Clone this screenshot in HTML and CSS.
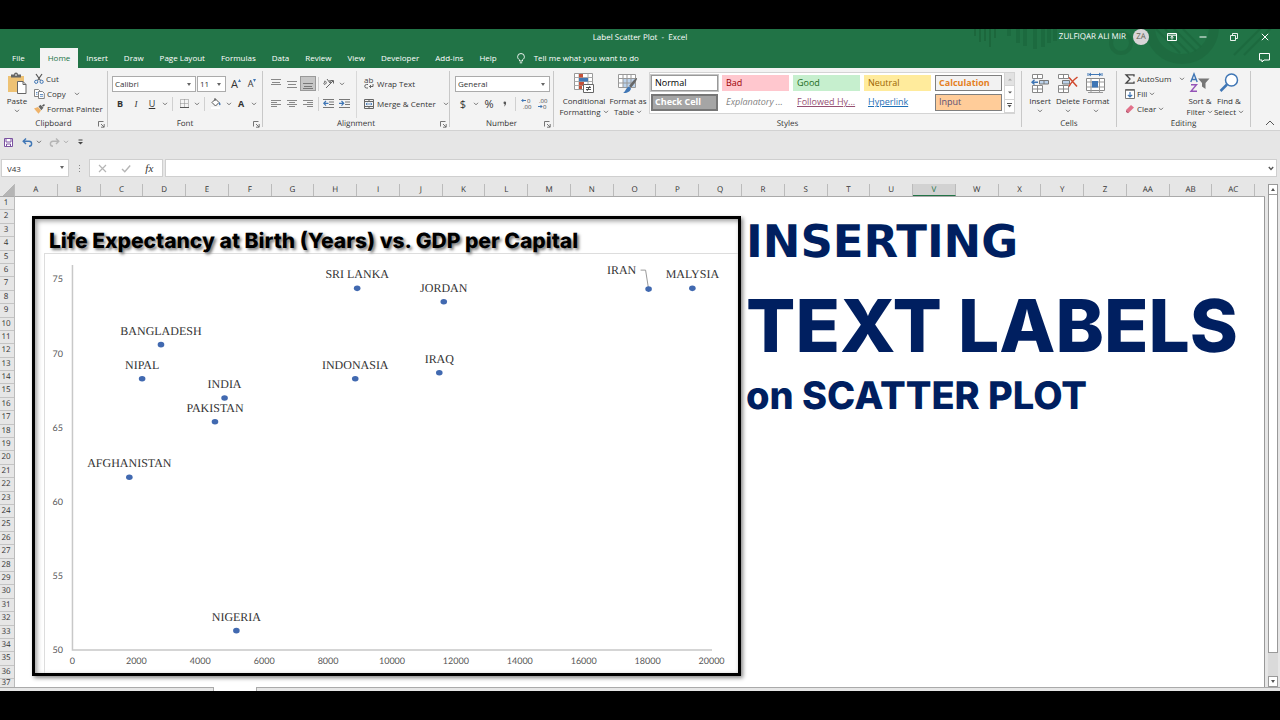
FILE: index.html
```html
<!DOCTYPE html>
<html lang="en">
<head>
    <meta charset="UTF-8">
    <meta name="viewport" content="width=device-width, initial-scale=1.0">
    <title>Label Scatter Plot - Excel</title>
    <link rel="stylesheet" href="styles.css">
</head>
<body>
    <!-- shared glyphs -->
    <svg class="defs" aria-hidden="true">
        <symbol id="chev" viewBox="0 0 6 4"><path d="M1 .8 3 2.8 5 .8" fill="none" stroke="#666" stroke-width=".9"/></symbol>
        <symbol id="launch" viewBox="0 0 7 7"><path d="M.5 5.5v-5h5M3 3l3 3M6.2 3v3.2H3" fill="none" stroke="#666" stroke-width=".9"/></symbol>
    </svg>

    <div class="app">
        <header class="titlebar">
            <svg class="pattern" viewBox="0 0 320 39" aria-hidden="true">
                <g fill="none" stroke="#1a6239">
                    <path d="M15 0v7M20 0v13M25 0v12M30 0v18M35 0v9" stroke-width="2"/>
                    <path d="M49 0v7M58 0v14M65 0v17M75 0v20M83 0v18M89 0v14M95 0v12" stroke-width="4" opacity=".7"/>
                    <circle cx="161" cy="14" r="10" stroke-width="4" opacity=".6"/>
                    <circle cx="222" cy="-2" r="32" stroke-width="10" opacity=".6"/>
                    <path d="M196 0l24 24M205 0l24 24M214 0l22 22M223 0l18 18M274 26l28-28M284 26l28-28" stroke-width="2" opacity=".7"/>
                </g>
            </svg>
            <div class="title-row">
                <h1 class="doc-title">Label Scatter Plot&nbsp; -&nbsp; Excel</h1>
                <div class="account">
                    <span>ZULFIQAR ALI MIR</span>
                    <span class="avatar">ZA</span>
                    <div class="win-buttons">
                        <button aria-label="Ribbon display options"><svg width="10" height="8" viewBox="0 0 10 8"><path d="M.5.5h9v7h-9zM.5 2.2h9M5 6.5v-3M3.5 4.7 5 3.3l1.5 1.4" fill="none" stroke="#fff"/></svg></button>
                        <button aria-label="Minimize"><svg width="8" height="8" viewBox="0 0 8 8"><path d="M.5 4h7" stroke="#fff"/></svg></button>
                        <button aria-label="Restore"><svg width="8" height="8" viewBox="0 0 8 8"><path d="M.5 2.5h5v5h-5zM2.5 2.5v-2h5v5h-2" fill="none" stroke="#fff" stroke-width=".9"/></svg></button>
                        <button aria-label="Close"><svg width="8" height="8" viewBox="0 0 8 8"><path d="M.8.8l6.4 6.4M7.2.8.8 7.2" stroke="#fff"/></svg></button>
                    </div>
                </div>
            </div>
            <nav class="tabs">
                <button class="file">File</button>
                <button class="active">Home</button>
                <button>Insert</button>
                <button>Draw</button>
                <button>Page Layout</button>
                <button>Formulas</button>
                <button>Data</button>
                <button>Review</button>
                <button>View</button>
                <button>Developer</button>
                <button>Add-ins</button>
                <button>Help</button>
                <button class="tell"><svg width="8" height="11" viewBox="0 0 8 11"><path d="M2.5 8V6.8C1.200 6 .6 5 .6 3.800a3.400 3.300 0 0 1 6.800 0c0 1.200-.6 2.200-1.900 3V8zM2.800 9.800h2.400" fill="none" stroke="#fff" stroke-width=".9"/></svg>Tell me what you want to do</button>
                <button class="comments" aria-label="Comments"><svg width="11" height="10" viewBox="0 0 11 10"><path d="M.5.5h10v6.500H5L3 9V7H.5z" fill="none" stroke="#fff"/></svg></button>
            </nav>
        </header>

        <section class="ribbon">
            <div class="group clipboard">
                <div class="group-body">
                    <button class="big"><svg width="20" height="21" viewBox="0 0 20 21"><path d="M1 3h16v16H1z" fill="#eec274"/><path d="M4 4.500v-3h3a1.800 1.800 0 0 1 4 0h3v3z" fill="#666"/><path d="M8 2h2" stroke="#fff"/><path d="M10.500 8.500h5.500l3 3v9h-8.500z" fill="#fff" stroke="#666"/><path d="M16 8.500v3h3" fill="none" stroke="#666"/></svg>Paste<svg class="chev"><use href="#chev"/></svg></button>
                    <div class="stack">
                        <button><svg width="10" height="10" viewBox="0 0 10 10"><path d="M2 0l4.500 6.500M8 0 3.500 6.500" stroke="#555" stroke-width="1.200"/><circle cx="2.200" cy="7.800" r="1.600" fill="none" stroke="#3f76b5"/><circle cx="7.600" cy="7.800" r="1.600" fill="none" stroke="#3f76b5"/></svg>Cut</button>
                        <button><svg width="11" height="10" viewBox="0 0 11 10"><path d="M.5.5h4l1.500 1.500v5.500H.5z" fill="#fff" stroke="#777" stroke-width=".9"/><path d="M4.500 2.500h4l1.800 1.800v5.200H4.500z" fill="#fff" stroke="#777" stroke-width=".9"/><path d="M6 5.500h3M6 7.300h3M2 3.500h1.500M2 5.200h1.500" stroke="#3f76b5" stroke-width=".8"/></svg>Copy<svg class="chev"><use href="#chev"/></svg></button>
                        <button><svg width="11" height="10" viewBox="0 0 11 10"><path d="M0 4.500 4 3l3 3.500L4.500 9.800z" fill="#efb36a"/><path d="M4.500 2.500 6.500.8l3 3-2.200 2.400z" fill="#666"/><path d="M8.500 2.200 10.500.6" stroke="#555" stroke-width="1.500"/></svg>Format Painter</button>
                    </div>
                </div>
                <div class="group-label">Clipboard<svg class="launch"><use href="#launch"/></svg></div>
            </div>

            <div class="group font">
                <div class="group-body rows">
                    <div class="row">
                        <label class="drop face"><select aria-label="Font"><option>Calibri</option></select></label>
                        <label class="drop size"><select aria-label="Font size"><option>11</option></select></label>
                        <button class="t gap">A<svg width="3" height="3" viewBox="0 0 3 3"><path d="M0 3 1.500 0 3 3z" fill="#3f76b5"/></svg></button>
                        <button class="t small">A<svg width="3" height="3" viewBox="0 0 3 3"><path d="M0 0h3L1.500 3z" fill="#3f76b5"/></svg></button>
                    </div>
                    <div class="row">
                        <button class="t"><b>B</b></button>
                        <button class="t serif"><i>I</i></button>
                        <button class="t"><u>U</u></button>
                        <button class="c"><svg class="chev"><use href="#chev"/></svg></button>
                        <span class="sep"></span>
                        <button class="t"><svg width="9" height="9" viewBox="0 0 9 9"><path d="M.5.5h8v8h-8zM4.500.5v8M.5 4.500h8" fill="none" stroke="#888" stroke-dasharray="1 1"/><path d="M0 8.500h9" stroke="#555"/></svg></button>
                        <button class="c"><svg class="chev"><use href="#chev"/></svg></button>
                        <span class="sep"></span>
                        <button class="t"><svg width="10" height="11" viewBox="0 0 10 11"><path d="M1 4.500 4.500 1l3.500 3.500L4.500 8z" fill="#fff" stroke="#555"/><path d="M4 0v3" stroke="#555"/><path d="M8.500 4c1.500 2 1.200 3 .4 3.200S7.500 6 8.500 4z" fill="#3f76b5"/><path d="M0 9h9v2H0z" fill="#fff"/></svg></button>
                        <button class="c"><svg class="chev"><use href="#chev"/></svg></button>
                        <button class="t"><b>A</b></button>
                        <button class="c"><svg class="chev"><use href="#chev"/></svg></button>
                    </div>
                </div>
                <div class="group-label">Font<svg class="launch"><use href="#launch"/></svg></div>
            </div>

            <div class="group align">
                <div class="group-body">
                    <div class="rows">
                        <div class="row">
                            <button class="t"><svg width="10" height="10" viewBox="0 0 10 10"><path d="M0 .5h10M1 3.500h8M0 5.500h10" stroke="#888"/></svg></button>
                            <button class="t"><svg width="10" height="10" viewBox="0 0 10 10"><path d="M0 2.500h10M1 5.500h8M0 8.500h10" stroke="#888"/></svg></button>
                            <button class="t pressed"><svg width="10" height="10" viewBox="0 0 10 10"><path d="M0 4.500h10M1 7.500h8M0 9.500h10" stroke="#777"/></svg></button>
                            <span class="sep"></span>
                            <button class="t"><svg width="12" height="11" viewBox="0 0 12 11"><path d="M3 10 10 3M10.500 5.500V2.500h-3" fill="none" stroke="#666"/><path d="M1 3.500c2-1 3 1 1.500 2.500S0 5 2 4M4 1l3 4M6 3c2-1 2.500 1 1 2" fill="none" stroke="#555" stroke-width=".9"/></svg></button>
                            <button class="c"><svg class="chev"><use href="#chev"/></svg></button>
                        </div>
                        <div class="row">
                            <button class="t"><svg width="10" height="10" viewBox="0 0 10 10"><path d="M0 1.500h10M0 3.500h6M0 5.500h10M0 7.500h6" stroke="#888"/></svg></button>
                            <button class="t"><svg width="10" height="10" viewBox="0 0 10 10"><path d="M0 1.500h10M2 3.500h6M0 5.500h10M2 7.500h6" stroke="#888"/></svg></button>
                            <button class="t"><svg width="10" height="10" viewBox="0 0 10 10"><path d="M0 1.500h10M4 3.500h6M0 5.500h10M4 7.500h6" stroke="#888"/></svg></button>
                            <span class="sep"></span>
                            <button class="t"><svg width="12" height="10" viewBox="0 0 12 10"><path d="M0 .5h11M6 3h5M6 5.500h5M0 8.500h11" stroke="#777"/><path d="M5.500 4.300H1M3 2 .8 4.300 3 6.600" fill="none" stroke="#3f76b5" stroke-width="1.200"/></svg></button>
                            <button class="t"><svg width="12" height="10" viewBox="0 0 12 10"><path d="M0 .5h11M6 3h5M6 5.500h5M0 8.500h11" stroke="#777"/><path d="M0 4.300h4.500M2.500 2l2.200 2.300-2.200 2.300" fill="none" stroke="#3f76b5" stroke-width="1.200"/></svg></button>
                        </div>
                    </div>
                    <div class="rows wrap">
                        <button class="txt"><svg width="10" height="11" viewBox="0 0 10 11"><text x="0" y="5" class="ico wide">ab</text><path d="M4 6.500H2.500a1.700 1.700 0 0 0 0 3.500H4M9 6v2.500H5.500M7 7 5.500 8.500 7 10" fill="none" stroke="#555" stroke-width=".9"/></svg>Wrap Text</button>
                        <button class="txt"><svg width="10" height="10" viewBox="0 0 10 10"><path d="M.5.5h9v9h-9zM.5 2.500h9M.5 7.500h9M5 .5v2M5 7.500v2" fill="none" stroke="#666"/><path d="M2 5h6M3.200 3.800 2 5l1.200 1.200M6.800 3.800 8 5 6.800 6.200" fill="none" stroke="#3f76b5" stroke-width=".8"/></svg>Merge &amp; Center<svg class="chev far"><use href="#chev"/></svg></button>
                    </div>
                </div>
                <div class="group-label">Alignment<svg class="launch"><use href="#launch"/></svg></div>
            </div>

            <div class="group number">
                <div class="group-body rows">
                    <div class="row">
                        <label class="drop format"><select aria-label="Number format"><option>General</option></select></label>
                    </div>
                    <div class="row">
                        <button class="t sym">$</button>
                        <button class="c"><svg class="chev"><use href="#chev"/></svg></button>
                        <button class="t sym">%</button>
                        <button class="t sym"><svg width="4" height="6" viewBox="0 0 4 6"><path d="M.5 1.800a1.300 1.300 0 1 1 2.600 0C3.100 3.500 2.500 5 .8 5.500c.7-.8 1-1.500.9-2.300C1 3.200.5 2.600.5 1.800z" fill="#555"/></svg></button>
                        <span class="sep"></span>
                        <button class="t"><svg width="11" height="11" viewBox="0 0 11 11"><path d="M5 2.500H.8M2.300 1 .8 2.500 2.300 4" fill="none" stroke="#3f76b5"/><text x="6" y="5" class="ico">0</text><text x="2" y="11" class="ico">.00</text></svg></button>
                        <button class="t"><svg width="11" height="11" viewBox="0 0 11 11"><path d="M1 8.500h4M3.500 7 5 8.500 3.500 10" fill="none" stroke="#3f76b5"/><text x="2" y="5" class="ico">.00</text><text x="6" y="11" class="ico">0</text></svg></button>
                    </div>
                </div>
                <div class="group-label">Number<svg class="launch"><use href="#launch"/></svg></div>
            </div>

            <div class="group styles">
                <div class="group-body">
                    <button class="big cond"><svg width="20" height="21" viewBox="0 0 20 21"><path d="M.5.5h18v16H.5z" fill="#fff" stroke="#999"/><path d="M5 .5v16M14 .5v16M.5 4.500h18M.5 8.500h18M.5 12.500h18" stroke="#aaa"/><path d="M5 1h4v3.500H5zM5 9h5v3.500H5zM5 13h3v3H5z" fill="#c4513a"/><path d="M5 5h9v3.500H5z" fill="#3f76b5"/><path d="M9.500 11.500h10v8h-10z" fill="#fff" stroke="#666"/><path d="M12 14.500h5M12 16.500h5M16 13l-3 5" stroke="#444" stroke-width=".9"/></svg>Conditional<span>Formatting <svg class="chev"><use href="#chev"/></svg></span></button>
                    <button class="big table"><svg width="20" height="21" viewBox="0 0 20 21"><path d="M.5 1.500h17v13H.5z" fill="#fff" stroke="#999"/><path d="M5 6h12v8H5z" fill="#bcd3ec"/><path d="M5 1.500v13M9 1.500v13M13 1.500v13M.5 5.500h17M.5 10h17" stroke="#999"/><path d="M19 5c.8 1-4 8-6 9.500L11 13c1.500-2 7-9 8-8z" fill="#666"/><path d="M11 13.500l2 2c-.5 3-4 5-8 4.500 2.500-1 2.500-5 6-6.500z" fill="#3f76b5"/></svg>Format as<span>Table <svg class="chev"><use href="#chev"/></svg></span></button>
                    <div class="gallery">
                        <div class="swatches">
                            <button class="normal">Normal</button>
                            <button class="bad">Bad</button>
                            <button class="good">Good</button>
                            <button class="neutral">Neutral</button>
                            <button class="calc">Calculation</button>
                            <button class="check">Check Cell</button>
                            <button class="expl">Explanatory ...</button>
                            <button class="followed">Followed Hy...</button>
                            <button class="link">Hyperlink</button>
                            <button class="input">Input</button>
                        </div>
                        <div class="gallery-nav">
                            <button class="off" aria-label="Up"><svg width="4" height="3" viewBox="0 0 4 3"><path d="M0 2.500 2 .5l2 2z" fill="#aaa"/></svg></button>
                            <button aria-label="Down"><svg width="4" height="3" viewBox="0 0 4 3"><path d="M0 .5h4l-2 2z" fill="#555"/></svg></button>
                            <button aria-label="More"><svg width="5" height="5" viewBox="0 0 5 5"><path d="M0 .5h5" stroke="#555"/><path d="M.5 2h4l-2 2.500z" fill="#555"/></svg></button>
                        </div>
                    </div>
                </div>
                <div class="group-label">Styles</div>
            </div>

            <div class="group cells">
                <div class="group-body">
                    <button class="big"><svg width="20" height="21" viewBox="0 0 20 21"><path d="M2.500 1.500h10v4h-10zM7.500 1.500v4M2.500 12.500h10v7h-10zM7.500 12.500v7M2.500 16h10" fill="#fff" stroke="#888"/><path d="M9.500 7.500h9v3.500h-9zM14 7.500V11" fill="#bcd3ec" stroke="#777"/><path d="M8 9.200H2M4.500 6.800 2 9.200l2.500 2.400" fill="none" stroke="#3f76b5" stroke-width="1.400"/></svg>Insert<svg class="chev"><use href="#chev"/></svg></button>
                    <button class="big"><svg width="20" height="21" viewBox="0 0 20 21"><path d="M.5 1.500h10v4H.5zM5.500 1.500v4M.5 12.500h10v7H.5zM5.500 12.500v7M.5 16h10" fill="#fff" stroke="#888"/><path d="M4.500 7.500h7V11h-7z" fill="#bcd3ec" stroke="#777"/><path d="M11 4.500l8 9M19.500 4c-4 3-7 6-8.500 9.500" fill="none" stroke="#d1492e" stroke-width="1.500"/></svg>Delete<svg class="chev"><use href="#chev"/></svg></button>
                    <button class="big"><svg width="20" height="21" viewBox="0 0 20 21"><path d="M2 0v3M16 0v3M3 1.500h12M5 0 3 1.500 5 3M13 0l2 1.500L13 3" fill="none" stroke="#3f76b5"/><path d="M.5 5.500h18v12H.5z" fill="#fff" stroke="#888"/><path d="M5 5.500v14M13.500 5.500v14M.5 9h18M.5 14h18M2 19.500h15" stroke="#999" fill="none"/><path d="M6 8h6v6.500H6z" fill="#3f76b5"/></svg>Format<svg class="chev"><use href="#chev"/></svg></button>
                </div>
                <div class="group-label">Cells</div>
            </div>

            <div class="group editing">
                <div class="group-body">
                    <div class="stack">
                        <button><svg width="10" height="10" viewBox="0 0 10 10"><path d="M9 2.500V.8H1L5 5 1 9.200h8V7.500" fill="none" stroke="#444" stroke-width="1.300"/></svg>AutoSum<svg class="chev"><use href="#chev"/></svg></button>
                        <button><svg width="10" height="10" viewBox="0 0 10 10"><path d="M.5.5h9v9h-9z" fill="#fff" stroke="#777"/><path d="M.5 1h9" stroke="#666" stroke-width="1.500"/><path d="M5 3v5M2.800 5.800 5 8l2.200-2.200" fill="none" stroke="#3f76b5" stroke-width="1.200"/></svg>Fill<svg class="chev near"><use href="#chev"/></svg></button>
                        <button><svg width="10" height="10" viewBox="0 0 10 10"><path d="M1 6 6 1l3 2.500-5 5z" fill="#e2718a"/><path d="M1 6l3 2.500-1 .8L1 8z" fill="#b8506a"/></svg>Clear<svg class="chev near"><use href="#chev"/></svg></button>
                    </div>
                    <button class="big sort"><svg width="20" height="21" viewBox="0 0 20 21"><path d="M.8 9 4 1l3.200 8M2 6.500h4" fill="none" stroke="#3f76b5" stroke-width="1.400"/><path d="M1 11.700h5.500L1 18.300h6" fill="none" stroke="#9454b8" stroke-width="1.400"/><path d="M8 5.500h11.500L15.500 10v6L12 13.500V10z" fill="#777"/></svg>Sort &amp;<span>Filter <svg class="chev"><use href="#chev"/></svg></span></button>
                    <button class="big find"><svg width="20" height="21" viewBox="0 0 20 21"><circle cx="12.500" cy="7" r="6" fill="#fff" stroke="#3f76b5" stroke-width="1.500"/><path d="M8 11.500 1.500 18" stroke="#3f76b5" stroke-width="2.500"/></svg>Find &amp;<span>Select <svg class="chev"><use href="#chev"/></svg></span></button>
                </div>
                <div class="group-label">Editing</div>
            </div>
            <button class="collapse" aria-label="Collapse ribbon"><svg width="10" height="6" viewBox="0 0 10 6"><path d="M1 5l4-4 4 4" fill="none" stroke="#555"/></svg></button>
        </section>

        <div class="quick">
            <button aria-label="Save"><svg width="9" height="9" viewBox="0 0 9 9"><path d="M.5.5h8v8h-8z" fill="#fff" stroke="#7b52a1"/><path d="M2 1v3h5V1M2.500 8V6h4v2" fill="none" stroke="#7b52a1"/></svg></button>
            <button aria-label="Undo"><svg width="11" height="9" viewBox="0 0 11 9"><path d="M4 .6 1.200 3.300 4 6M1.500 3.300H7c3.500 0 3.500 5 0 5" fill="none" stroke="#3f76b5" stroke-width="1.400"/></svg></button>
            <button class="c"><svg class="chev"><use href="#chev"/></svg></button>
            <button class="redo" aria-label="Redo"><svg width="11" height="9" viewBox="0 0 11 9"><path d="M7 .6l2.800 2.700L7 6M9.500 3.300H4c-3.500 0-3.500 5 0 5" fill="none" stroke="#b5b5b5" stroke-width="1.400"/></svg></button>
            <button class="c faded"><svg class="chev"><use href="#chev"/></svg></button>
            <button class="more" aria-label="Customize"><svg width="5" height="6" viewBox="0 0 5 6"><path d="M.5 1h4" stroke="#444"/><path d="M0 3h5L2.500 5.500z" fill="#444"/></svg></button>
        </div>

        <div class="formula-bar">
            <label class="drop namebox"><input type="text" value="V43" aria-label="Name box"></label>
            <span class="dots"><i></i><i></i><i></i></span>
            <div class="fx">
                <button aria-label="Cancel"><svg width="9" height="9" viewBox="0 0 9 9"><path d="M1 1l7 7M8 1 1 8" stroke="#b5b5b5" stroke-width="1.200"/></svg></button>
                <button aria-label="Enter"><svg width="10" height="9" viewBox="0 0 10 9"><path d="M1 5l2.800 2.800L9.200 1.500" fill="none" stroke="#b5b5b5" stroke-width="1.400"/></svg></button>
                <button class="fn">fx</button>
            </div>
            <label class="formula"><input type="text" aria-label="Formula"><svg width="6" height="5" viewBox="0 0 6 5"><path d="M.8 1 3 3.500 5.200 1" fill="none" stroke="#555" stroke-width="1.300"/></svg></label>
        </div>

        <main class="sheet">
            <div class="corner"></div>
            <div class="cols" id="cols"></div>
            <div class="rownums" id="rownums"></div>
            <div class="canvas">
                <figure class="chart">
                    <figcaption>Life Expectancy at Birth (Years) vs. GDP per Capital</figcaption>
                    <svg class="plot" viewBox="0 0 694 420" id="plot">
                        <path class="axis" d="M27.500 11v385.500H668"/>
                    </svg>
                </figure>
                <div class="headline">
                    <p class="one">INSERTING</p>
                    <p class="two">TEXT LABELS</p>
                    <p class="three">on SCATTER PLOT</p>
                </div>
            </div>
            <div class="scroll">
                <button aria-label="Scroll up"><svg width="4" height="3" viewBox="0 0 4 3"><path d="M0 3 2 0l2 3z" fill="#555"/></svg></button>
                <div class="thumb"></div>
                <button class="down" aria-label="Scroll down"><svg width="4" height="3" viewBox="0 0 4 3"><path d="M0 0h4L2 3z" fill="#555"/></svg></button>
            </div>
        </main>
        <footer class="sheet-tabs"><span class="strip left"></span><span class="tab"></span><span class="strip"></span></footer>
    </div>

    <script>
        const cols = document.getElementById('cols');
        const rownums = document.getElementById('rownums');
        const plot = document.getElementById('plot');

        // A..Z, AA..AC
        for (let i = 0; i < 29; i++) {
            const el = document.createElement('span');
            el.textContent = (i > 25 ? 'A' : '') + String.fromCharCode(65 + i % 26);
            if (el.textContent === 'V') el.className = 'selected';
            cols.appendChild(el);
        }

        for (let r = 1; r <= 37; r++) {
            const el = document.createElement('span');
            el.textContent = r;
            rownums.appendChild(el);
        }

        const add = (tag, attrs, text) => {
            const el = document.createElementNS('http://www.w3.org/2000/svg', tag);
            for (const k in attrs) el.setAttribute(k, attrs[k]);
            if (text !== undefined) el.textContent = text;
            plot.appendChild(el);
        };

        // plot area: 0..20000 across, 50..75 up
        const px = gdp => 27.5 + gdp * 640 / 20000;
        const py = age => 396.5 - (age - 50) * 371 / 25;

        for (let v = 50; v <= 75; v += 5) add('text', { x: 18, y: py(v) + 3, class: 'tick y' }, v);
        for (let v = 0; v <= 20000; v += 2000) add('text', { x: px(v), y: 411, class: 'tick' }, v);

        // name, GDP per capita, life expectancy
        const data = [
            ['SRI LANKA', 8910, 74.4],
            ['JORDAN', 11620, 73.5],
            ['IRAN', 18030, 74.35, -27, -15],
            ['MALYSIA', 19400, 74.4],
            ['BANGLADESH', 2770, 70.6],
            ['NIPAL', 2180, 68.3],
            ['INDIA', 4760, 67],
            ['PAKISTAN', 4460, 65.4],
            ['INDONASIA', 8850, 68.3],
            ['IRAQ', 11480, 68.7],
            ['AFGHANISTAN', 1780, 61.65],
            ['NIGERIA', 5130, 51.3]
        ];
        data.forEach(([name, gdp, age, dx = 0, dy = -10]) => {
            const x = px(gdp), y = py(age);
            if (dx) add('path', { d: `M${x - 8} ${y - 19}h5l3 19`, class: 'leader' });
            add('ellipse', { cx: x, cy: y, rx: 3.3, ry: 2.8, class: 'dot' });
            add('text', { x: x + dx, y: y + dy, class: 'name' }, name);
        });
    </script>
</body>
</html>
```
FILE: styles.css
```css
/* --- RESET & BASE -------------------------------------- */
* { box-sizing: border-box; margin: 0; padding: 0; }
body {
    min-height: 100vh;
    display: flex;
    padding: 29px 0;
    background: #000;
    color: #333;
    font: 8px/12px "Open Sans", "Noto Sans", sans-serif;
    text-rendering: geometricPrecision;
}
button, input, select { font: inherit; color: inherit; background: none; border: none; border-radius: 0; outline: none; }
button { display: flex; align-items: center; justify-content: center; white-space: nowrap; }
svg { display: block; flex: none; overflow: visible; }
.defs { position: absolute; width: 0; height: 0; }
.chev { width: 6px; height: 4px; }
.app { flex: 1; min-width: 0; display: flex; flex-direction: column; background: #e6e6e6; }

/* --- TITLE BAR ----------------------------------------- */
.titlebar { position: relative; background: #217346; color: #fff; overflow: hidden; }
.pattern { position: absolute; top: 0; right: 0; width: 320px; height: 39px; opacity: .7; }
.title-row { position: relative; display: grid; grid-template-columns: 1fr auto 1fr; align-items: center; height: 19px; padding-bottom: 5px; }
.doc-title { grid-column: 2; padding-top: 2px; font: inherit; }
.account { display: flex; align-items: center; justify-content: flex-end; }
.avatar { width: 16px; height: 16px; margin-left: 7px; border-radius: 50%; background: #d9d5d8; color: #665; line-height: 16px; text-align: center; }
.win-buttons { display: flex; margin-left: 7px; }
.win-buttons button { width: 31px; height: 14px; }
.tabs { position: relative; display: flex; height: 20px; }
.tabs button { padding: 0 8px; }
.tabs .file { padding: 0 15px 0 12px; }
.tabs .active { background: #f3f3f3; color: #217346; }
.tabs .tell { gap: 9px; padding-left: 12px; }
.tabs .comments { margin-left: auto; padding-right: 10px; }

/* --- RIBBON -------------------------------------------- */
.ribbon { display: flex; height: 63px; padding: 3px 0; background: #f3f3f3; border-bottom: 1px solid #d2d2d2; }
.group { display: flex; flex-direction: column; flex: none; border-right: 1px solid #c8c8c8; }
.group-body { display: flex; flex: none; height: 47px; }
.group-label { position: relative; line-height: 12px; text-align: center; }
.launch { position: absolute; right: 2px; top: 3px; width: 7px; height: 7px; }
.clipboard { width: 108px; }
.font { width: 155px; }
.align { width: 187px; }
.number { width: 104px; }
.styles { flex: 1; }
.cells { width: 95px; }
.editing { width: 134px; }

.big { flex-direction: column; justify-content: flex-start; width: 28px; padding-top: 2px; line-height: 11px; }
.big > svg:first-child { margin-bottom: 1px; }
.big .chev { margin-top: 3px; }
.big span { display: flex; align-items: center; gap: 2px; }
.big span .chev { margin: 0; }
.clipboard .big { width: 34px; }
.stack { display: flex; flex-direction: column; }
.stack button { justify-content: flex-start; gap: 2px; height: 15px; }
.stack .chev { margin-left: 6px; }
.stack .near { margin-left: 0; }

.rows { display: flex; flex-direction: column; gap: 5px; padding-top: 5px; }
.row { display: flex; align-items: center; height: 15px; }
.group-body.rows { padding-left: 4px; }
.t { width: 16px; height: 15px; font-size: 9px; }
.serif { font-family: "Liberation Serif", serif; }
.t.gap { margin-left: 2px; font-size: 11px; }
.gap svg, .small svg { margin-bottom: 6px; }
.t.sym { font-size: 11px; }
.c { width: 9px; height: 15px; }
.pressed { background: #c6c6c6; border: 1px solid #999; }
.sep { width: 1px; height: 14px; margin: 0 2px; background: #d0d0d0; }
.font .sep { margin: 0 3px; }
.ico { font: 6px "Open Sans", sans-serif; fill: #444; }
.ico.wide { font-size: 8px; }
.align .rows { padding-left: 5px; }
.align .wrap { margin-left: 3px; padding-left: 7px; border-left: 1px solid #d8d8d8; }
.number .row + .row { padding-left: 1px; }
.number .c { width: 10px; }
.txt { justify-content: flex-start; gap: 3px; height: 15px; }
.txt .far { margin-left: 4px; }

/* drop-downs */
.drop { position: relative; display: block; height: 16px; background: #fff; border: 1px solid #ababab; }
.drop::after { content: ""; position: absolute; right: 4px; top: 6px; border: 2px solid transparent; border-top: 3px solid #666; border-bottom: 0; }
.drop select, .drop input { appearance: none; display: block; width: 100%; height: 100%; padding-left: 2px; }
.drop.face { width: 84px; }
.drop.size { width: 29px; margin-left: 1px; }
.drop.format { width: 95px; margin-left: 1px; }

/* style gallery */
.cond { width: 60px; }
.table { width: 28px; }
.gallery { display: flex; flex: 1; margin: 1px 6px 4px 7px; background: #fff; border: 1px solid #d4d4d4; }
.swatches { flex: 1; display: grid; grid-template-columns: repeat(5, 1fr); gap: 3px 4px; padding: 2px 2px 2px 1px; }
.swatches button { justify-content: flex-start; padding-left: 3px; font-size: 9px; border: 1px solid transparent; }
.swatches .normal { color: #000; border: 1px solid #999; box-shadow: 0 0 0 1px #c6c6c6; }
.swatches .bad { background: #ffc7ce; color: #9c0006; }
.swatches .good { background: #c6efce; color: #1c6b1c; }
.swatches .neutral { background: #ffeb9c; color: #9c6500; }
.swatches .calc { background: #f2f2f2; color: #e5801e; border-color: #7f7f7f; font-weight: 700; }
.swatches .check { background: #a5a5a5; color: #fff; border: 2px solid #777; font-weight: 700; padding-left: 2px; }
.swatches .expl { color: #7f7f7f; font-style: italic; }
.swatches .followed { color: #954f72; text-decoration: underline; }
.swatches .link { color: #1f6fb5; text-decoration: underline; }
.swatches .input { background: #ffcc99; color: #5a4f76; border-color: #7f7f7f; }
.gallery-nav { display: flex; flex-direction: column; width: 10px; border-left: 1px solid #d4d4d4; }
.gallery-nav button { flex: 1; border-bottom: 1px solid #d4d4d4; }
.gallery-nav .off { background: #e2e2e2; }

.cells .group-body { padding-left: 4px; }
.editing .stack { width: 68px; padding-left: 8px; }
.sort { width: 30px; }
.find { width: 28px; }
.collapse { width: 29px; align-self: flex-end; padding: 0 0 1px 8px; }

/* --- QUICK ACCESS & FORMULA BAR ------------------------ */
.quick { display: flex; align-items: center; height: 22px; padding-left: 4px; }
.quick button { height: 15px; }
.quick button + button { margin-left: 9px; }
.quick button.c { width: 6px; margin-left: 3px; }
.quick .faded { opacity: .5; }
.quick button.redo { margin-left: 7px; }
.formula-bar { display: flex; height: 31px; padding: 6px 3px 7px 1px; }
.formula-bar .drop { width: 68px; height: 18px; border-color: #cfcfcf; }
.formula-bar .drop input { padding-left: 5px; }
.dots { display: flex; flex-direction: column; justify-content: center; gap: 2px; width: 20px; align-items: center; }
.dots i { width: 1px; height: 1px; background: #888; }
.fx { display: flex; width: 74px; padding: 0 1px; background: #fff; border: 1px solid #cfcfcf; }
.fx button { flex: 1; }
.fx .fn { font: italic 11px "Liberation Serif", serif; }
.formula { flex: 1; display: flex; align-items: center; margin-left: 2px; padding-right: 2px; background: #fff; border: 1px solid #cfcfcf; }
.formula input { flex: 1; min-width: 0; }

/* --- SHEET --------------------------------------------- */
.sheet { flex: 1; display: grid; grid-template: 13px 1fr / 15px 1fr 15px; min-height: 0; }
.corner { border-right: 1px solid #bbb; border-bottom: 1px solid #aaa; background: linear-gradient(135deg, transparent 55%, #b5b5b5 55%); }
.cols { display: flex; padding-right: 10px; border-bottom: 1px solid #aaa; }
.cols span { flex: 1; border-right: 1px solid #bbb; text-align: center; }
.cols .selected { background: #d2d2d2; color: #217346; border-bottom: 1px solid #217346; }
.rownums { display: flex; flex-direction: column; min-height: 0; overflow: hidden; border-right: 1px solid #bbb; }
.rownums span { flex: 1; min-height: 0; border-bottom: 1px solid #c4c4c4; padding-right: 2px; text-align: center; }
.rownums span:last-child { flex: 0 0 8px; border: none; line-height: 8px; }
.canvas { display: flex; align-items: flex-start; gap: 5px; min-width: 0; padding: 19px 0 10px 17px; background: #fff; border-right: 1px solid #999; }
.scroll { grid-area: 1 / 3 / 3 / 4; display: flex; flex-direction: column; padding: 0 2px 0 3px; background: linear-gradient(#dadada, #dadada) content-box; }
.scroll button { height: 11px; background: #fff; border: 1px solid #999; }
.thumb { height: 458px; background: #fff; border: 1px solid #999; border-top: 0; }
.scroll .down { margin-top: auto; }
.sheet-tabs { display: flex; height: 4px; }
.strip { flex: 1; border-top: 1px solid #aaa; border-left: 1px solid #aaa; }
.strip.left { flex: 0 0 214px; border-left: none; border-right: 1px solid #aaa; }
.tab { width: 42px; background: #fff; }

/* --- CHART --------------------------------------------- */
.chart { flex: 0 1 709px; border: 3px solid #000; background: #fff; box-shadow: 2px 2px 4px #888, inset 2px 2px 5px #999; }
.chart figcaption { height: 34px; padding: 9px 0 0 14px; color: #000; font: 800 21px/28px Inter, sans-serif; white-space: nowrap; text-shadow: 2px 2px 3px #777; }
.plot { width: calc(100% - 9px); margin-left: 9px; border: 1px solid #ddd; border-width: 1px 0 0 1px; }
.axis { fill: none; stroke: #c8c8c8; stroke-width: 1.5; }
.leader { fill: none; stroke: #999; }
.dot { fill: #4169b0; }
.tick { font: 9px Lato, sans-serif; fill: #555; text-anchor: middle; }
.tick.y { text-anchor: end; }
.name { font: 12px "Liberation Serif", serif; fill: #333; text-anchor: middle; }

/* --- HEADLINE ------------------------------------------ */
.headline { color: #001f60; font-family: Inter, sans-serif; font-weight: 800; white-space: nowrap; }
.headline .one { font: 700 45px/52px "DejaVu Sans", sans-serif; }
.headline .two { margin-top: 20px; font-size: 73px; line-height: 76px; }
.headline .three { margin-top: 8px; font-size: 38px; line-height: 48px; }
```
